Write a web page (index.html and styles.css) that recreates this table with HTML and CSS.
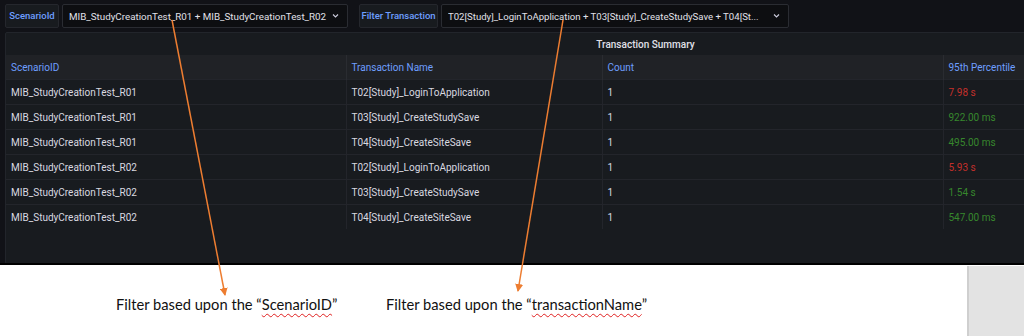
FILE: index.html
```html
<!DOCTYPE html>
<html lang="en">
<head>
    <meta charset="UTF-8">
    <title>Transaction Summary</title>
    <link rel="stylesheet" href="styles.css">
</head>
<body>
    <div class="shot">
        <div class="vars">
            <div class="var-label lbl-scenario">ScenarioId</div>
            <div class="var-select sel-scenario">
                <span>MIB_StudyCreationTest_R01 + MIB_StudyCreationTest_R02</span>
                <svg class="chev" width="7" height="4" viewBox="0 0 7 4"><path d="M1 .5l2.5 2.5 2.5-2.5" fill="none" stroke="#ccccdc" stroke-width="1.1"/></svg>
            </div>
            <div class="var-label lbl-trans">Filter Transaction</div>
            <div class="var-select sel-trans">
                <span>T02[Study]_LoginToApplication + T03[Study]_CreateStudySave + T04[St...</span>
                <svg class="chev" width="7" height="4" viewBox="0 0 7 4"><path d="M1 .5l2.5 2.5 2.5-2.5" fill="none" stroke="#ccccdc" stroke-width="1.1"/></svg>
            </div>
        </div>

        <div class="panel">
            <div class="panel-title">Transaction Summary</div>
            <table class="grid">
                <colgroup>
                    <col style="width:340px">
                    <col style="width:256px">
                    <col style="width:341px">
                    <col>
                </colgroup>
                <thead>
                    <tr>
                        <th>ScenarioID</th>
                        <th>Transaction Name</th>
                        <th>Count</th>
                        <th>95th Percentile</th>
                    </tr>
                </thead>
                <tbody>
                    <tr><td>MIB_StudyCreationTest_R01</td><td>T02[Study]_LoginToApplication</td><td>1</td><td class="bad">7.98 s</td></tr>
                    <tr><td>MIB_StudyCreationTest_R01</td><td>T03[Study]_CreateStudySave</td><td>1</td><td class="good">922.00 ms</td></tr>
                    <tr><td>MIB_StudyCreationTest_R01</td><td>T04[Study]_CreateSiteSave</td><td>1</td><td class="good">495.00 ms</td></tr>
                    <tr><td>MIB_StudyCreationTest_R02</td><td>T02[Study]_LoginToApplication</td><td>1</td><td class="bad">5.93 s</td></tr>
                    <tr><td>MIB_StudyCreationTest_R02</td><td>T03[Study]_CreateStudySave</td><td>1</td><td class="good">1.54 s</td></tr>
                    <tr><td>MIB_StudyCreationTest_R02</td><td>T04[Study]_CreateSiteSave</td><td>1</td><td class="good">547.00 ms</td></tr>
                </tbody>
            </table>
        </div>
    </div>

    <div class="doc">
        <div class="notes">
            <div class="note first">Filter based upon the &ldquo;<span class="typo">ScenarioID</span>&rdquo;</div>
            <div class="note">Filter based upon the &ldquo;<span class="typo">transactionName</span>&rdquo;</div>
        </div>
        <div class="gutter"></div>
    </div>

    <!-- annotation arrows drawn over the screenshot -->
    <svg class="arrows" width="1024" height="336" viewBox="0 0 1024 336">
        <defs>
            <marker id="head" markerWidth="8" markerHeight="8" refX="7" refY="4" orient="auto" markerUnits="userSpaceOnUse">
                <path d="M0 0L8 4L0 8z" fill="#ed7d31"/>
            </marker>
        </defs>
        <line x1="172" y1="20" x2="225" y2="295" stroke="#ed7d31" stroke-width="1.5" marker-end="url(#head)"/>
        <line x1="563" y1="20" x2="518" y2="291" stroke="#ed7d31" stroke-width="1.5" marker-end="url(#head)"/>
    </svg>
</body>
</html>
```

FILE: styles.css
```css
body {
    margin: 0;
    width: 1024px;
    height: 336px;
    overflow: hidden;
    position: relative;
    background: #fff;
    font-family: Roboto, "Liberation Sans", sans-serif;
}
.shot {
    height: 263px;
    background: #111217;
    border-bottom: 2px solid #000;
    overflow: hidden;
}
.vars {
    display: flex;
    align-items: center;
    padding: 4px 0 0 5px;
    height: 24px;
}
.var-label {
    box-sizing: border-box;
    height: 24px;
    line-height: 22px;
    text-align: center;
    background: #181b1f;
    border: 1px solid #25272d;
    border-radius: 2px;
    color: #6e9fff;
    font-size: 9.5px;
    font-weight: 500;
    white-space: nowrap;
}
.lbl-scenario {
    width: 54px;
}
.lbl-trans {
    width: 79px;
    margin-left: 11px;
}
.var-select {
    box-sizing: border-box;
    display: flex;
    align-items: center;
    height: 24px;
    margin-left: 3px;
    padding: 0 8px 0 6px;
    background: #0d0e11;
    border: 1px solid #2a2c32;
    border-radius: 2px;
    color: #e0e0e8;
    font-size: 9.8px;
    white-space: nowrap;
}
.sel-scenario {
    width: 286px;
}
.sel-trans {
    width: 348px;
    font-size: 9.6px;
}
.var-select span {
    flex: 1;
    min-width: 0;
    overflow: hidden;
}
.chev {
    flex-shrink: 0;
    margin-left: 4px;
}
.panel {
    margin: 4px 0 0 5px;
    width: 1279px;
    height: 230px;
    background: #181b1f;
    border: 1px solid #22252b;
    border-radius: 2px;
}
.panel-title {
    height: 22px;
    line-height: 23px;
    text-align: center;
    color: #e0e0e8;
    font-size: 10px;
    font-weight: 500;
}
.grid {
    width: 100%;
    table-layout: fixed;
    border-collapse: collapse;
    font-size: 10px;
}
.grid th {
    height: 24px;
    padding: 0 5px;
    text-align: left;
    font-weight: 400;
    color: #6e9fff;
    background: #202226;
    border-left: 1px solid #2a2c31;
}
.grid td {
    height: 24px;
    padding: 0 5px;
    color: #d8d9e0;
    border-top: 1px solid #23252b;
    border-left: 1px solid #23252b;
}
.grid th:first-child,
.grid td:first-child {
    border-left: none;
}
.grid td.bad {
    color: #c4302b;
}
.grid td.good {
    color: #37872d;
}
.doc {
    display: flex;
    height: 71px;
}
.notes {
    flex: 1;
    display: flex;
    padding: 30px 0 0 116px;
    font-family: Lato, "Open Sans", sans-serif;
    font-size: 14.7px;
    color: #111;
}
.note.first {
    width: 270px;
}
.typo {
    text-decoration: underline wavy #e02020;
    text-decoration-thickness: 1px;
    text-underline-offset: 3px;
}
.gutter {
    width: 55px;
    margin-top: 1px;
    background: #e3e3e3;
    border-left: 2px solid #cfcfcf;
}
.arrows {
    position: absolute;
    top: 0;
    left: 0;
    pointer-events: none;
}
```
